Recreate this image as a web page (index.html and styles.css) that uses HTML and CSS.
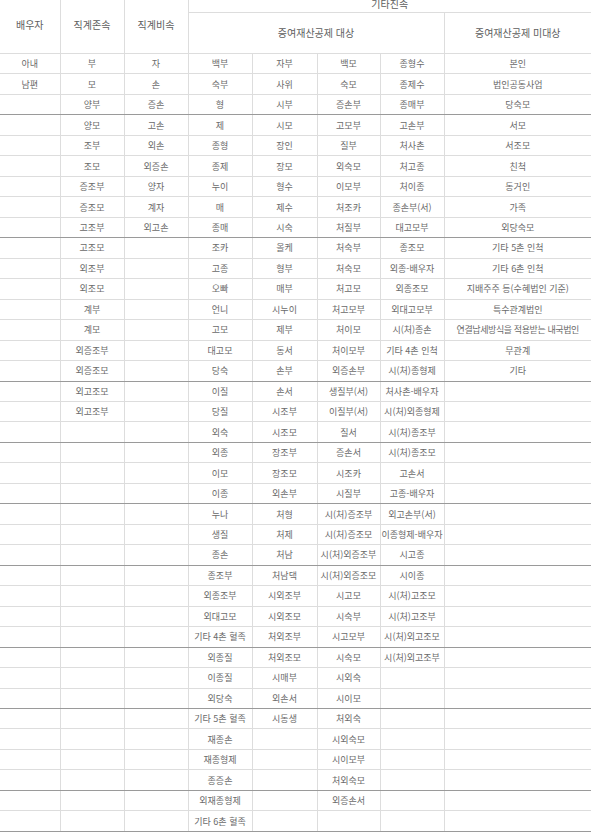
FILE: index.html
```html
<!DOCTYPE html>
<html lang="ko">
<head>
<meta charset="utf-8">
<title>친족 관계표</title>
<link rel="stylesheet" href="styles.css">
</head>
<body>
<table class="kin">
<colgroup>
<col class="w60"><col class="w64"><col class="w64"><col class="w64"><col class="w65"><col class="w63"><col class="w64"><col class="wlast">
</colgroup>
<thead>
<tr class="h1">
<th rowspan="2" class="first">배우자</th><th rowspan="2">직계존속</th><th rowspan="2">직계비속</th><th colspan="5" class="last">기타친족</th>
</tr>
<tr class="h2">
<th colspan="4">증여재산공제 대상</th><th class="last">증여재산공제 미대상</th>
</tr>
</thead>
<tbody>
<tr><td class="first">아내</td><td>부</td><td>자</td><td>백부</td><td>자부</td><td>백모</td><td>종형수</td><td class="last">본인</td></tr>
<tr><td class="first">남편</td><td>모</td><td>손</td><td>숙부</td><td>사위</td><td>숙모</td><td>종제수</td><td class="last">법인공동사업</td></tr>
<tr class="dk"><td class="first"></td><td>양부</td><td>증손</td><td>형</td><td>시부</td><td>증손부</td><td>종매부</td><td class="last">당숙모</td></tr>
<tr><td class="first"></td><td>양모</td><td>고손</td><td>제</td><td>시모</td><td>고모부</td><td>고손부</td><td class="last">서모</td></tr>
<tr><td class="first"></td><td>조부</td><td>외손</td><td>종형</td><td>장인</td><td>질부</td><td>처사촌</td><td class="last">서조모</td></tr>
<tr><td class="first"></td><td>조모</td><td>외증손</td><td>종제</td><td>장모</td><td>외숙모</td><td>처고종</td><td class="last">친척</td></tr>
<tr><td class="first"></td><td>증조부</td><td>양자</td><td>누이</td><td>형수</td><td>이모부</td><td>처이종</td><td class="last">동거인</td></tr>
<tr><td class="first"></td><td>증조모</td><td>계자</td><td>매</td><td>제수</td><td>처조카</td><td>종손부(서)</td><td class="last">가족</td></tr>
<tr class="dk"><td class="first"></td><td>고조부</td><td>외고손</td><td>종매</td><td>시숙</td><td>처질부</td><td>대고모부</td><td class="last">외당숙모</td></tr>
<tr><td class="first"></td><td>고조모</td><td></td><td>조카</td><td>올케</td><td>처숙부</td><td>종조모</td><td class="last">기타 5촌 인척</td></tr>
<tr><td class="first"></td><td>외조부</td><td></td><td>고종</td><td>형부</td><td>처숙모</td><td>외종-배우자</td><td class="last">기타 6촌 인척</td></tr>
<tr><td class="first"></td><td>외조모</td><td></td><td>오빠</td><td>매부</td><td>처고모</td><td>외종조모</td><td class="last">지배주주 등(수혜법인 기준)</td></tr>
<tr><td class="first"></td><td>계부</td><td></td><td>언니</td><td>시누이</td><td>처고모부</td><td>외대고모부</td><td class="last">특수관계법인</td></tr>
<tr><td class="first"></td><td>계모</td><td></td><td>고모</td><td>제부</td><td>처이모</td><td>시(처)종손</td><td class="last long">연결납세방식을 적용받는 내국법인</td></tr>
<tr><td class="first"></td><td>외증조부</td><td></td><td>대고모</td><td>동서</td><td>처이모부</td><td>기타 4촌 인척</td><td class="last">무관계</td></tr>
<tr class="dk"><td class="first"></td><td>외증조모</td><td></td><td>당숙</td><td>손부</td><td>외증손부</td><td>시(처)종형제</td><td class="last">기타</td></tr>
<tr><td class="first"></td><td>외고조모</td><td></td><td>이질</td><td>손서</td><td>생질부(서)</td><td>처사촌-배우자</td><td class="last"></td></tr>
<tr><td class="first"></td><td>외고조부</td><td></td><td>당질</td><td>시조부</td><td>이질부(서)</td><td>시(처)외종형제</td><td class="last"></td></tr>
<tr class="dk"><td class="first"></td><td></td><td></td><td>외숙</td><td>시조모</td><td>질서</td><td>시(처)종조부</td><td class="last"></td></tr>
<tr><td class="first"></td><td></td><td></td><td>외종</td><td>장조부</td><td>증손서</td><td>시(처)종조모</td><td class="last"></td></tr>
<tr><td class="first"></td><td></td><td></td><td>이모</td><td>장조모</td><td>시조카</td><td>고손서</td><td class="last"></td></tr>
<tr class="dk"><td class="first"></td><td></td><td></td><td>이종</td><td>외손부</td><td>시질부</td><td>고종-배우자</td><td class="last"></td></tr>
<tr><td class="first"></td><td></td><td></td><td>누나</td><td>처형</td><td>시(처)증조부</td><td>외고손부(서)</td><td class="last"></td></tr>
<tr><td class="first"></td><td></td><td></td><td>생질</td><td>처제</td><td>시(처)증조모</td><td>이종형제-배우자</td><td class="last"></td></tr>
<tr class="dk"><td class="first"></td><td></td><td></td><td>종손</td><td>처남</td><td>시(처)외증조부</td><td>시고종</td><td class="last"></td></tr>
<tr><td class="first"></td><td></td><td></td><td>종조부</td><td>처남댁</td><td>시(처)외증조모</td><td>시이종</td><td class="last"></td></tr>
<tr><td class="first"></td><td></td><td></td><td>외종조부</td><td>시외조부</td><td>시고모</td><td>시(처)고조모</td><td class="last"></td></tr>
<tr><td class="first"></td><td></td><td></td><td>외대고모</td><td>시외조모</td><td>시숙부</td><td>시(처)고조부</td><td class="last"></td></tr>
<tr class="dk"><td class="first"></td><td></td><td></td><td>기타 4촌 혈족</td><td>처외조부</td><td>시고모부</td><td>시(처)외고조모</td><td class="last"></td></tr>
<tr><td class="first"></td><td></td><td></td><td>외종질</td><td>처외조모</td><td>시숙모</td><td>시(처)외고조부</td><td class="last"></td></tr>
<tr><td class="first"></td><td></td><td></td><td>이종질</td><td>시매부</td><td>시외숙</td><td></td><td class="last"></td></tr>
<tr class="dk"><td class="first"></td><td></td><td></td><td>외당숙</td><td>외손서</td><td>시이모</td><td></td><td class="last"></td></tr>
<tr><td class="first"></td><td></td><td></td><td>기타 5촌 혈족</td><td>시동생</td><td>처외숙</td><td></td><td class="last"></td></tr>
<tr><td class="first"></td><td></td><td></td><td>재종손</td><td></td><td>시외숙모</td><td></td><td class="last"></td></tr>
<tr><td class="first"></td><td></td><td></td><td>재종형제</td><td></td><td>시이모부</td><td></td><td class="last"></td></tr>
<tr class="dk"><td class="first"></td><td></td><td></td><td>종증손</td><td></td><td>처외숙모</td><td></td><td class="last"></td></tr>
<tr><td class="first"></td><td></td><td></td><td>외재종형제</td><td></td><td>외증손서</td><td></td><td class="last"></td></tr>
<tr class="dk"><td class="first"></td><td></td><td></td><td>기타 6촌 혈족</td><td></td><td></td><td></td><td class="last"></td></tr>
</tbody>
</table>
</body>
</html>
```

FILE: styles.css
```css
html, body {
  margin: 0;
  padding: 0;
  background: #ffffff;
}

.kin {
  border-collapse: collapse;
  table-layout: fixed;
  width: 591px;
  margin-top: -4px;
  font-family: "Noto Sans CJK KR", "Noto Sans", sans-serif;
  color: #6a6a6a;
}

.w60 { width: 60px; }
.w64 { width: 64px; }
.w65 { width: 65px; }
.w63 { width: 63px; }
.wlast { width: 147px; }

.kin th,
.kin td {
  border: 1px solid #dddddd;
  padding: 0;
  text-align: center;
  vertical-align: middle;
  white-space: nowrap;
  font-weight: normal;
  overflow: visible;
}

.kin .first { border-left: none; }
.kin .last { border-right: none; }

.kin th {
  font-size: 10px;
  line-height: 12px;
  color: #5e5e5e;
}

.kin .h1 th { height: 16px; border-top: none; }
.kin .h2 th { height: 40px; }

.kin td {
  font-size: 9px;
  line-height: 11px;
  height: 19.48px;
}

.kin tbody td:nth-child(6) { border-left-color: #777777; }

.kin tr.dk td { border-bottom-color: #9a9a9a; }

.kin td.long { letter-spacing: -0.4px; }
```
